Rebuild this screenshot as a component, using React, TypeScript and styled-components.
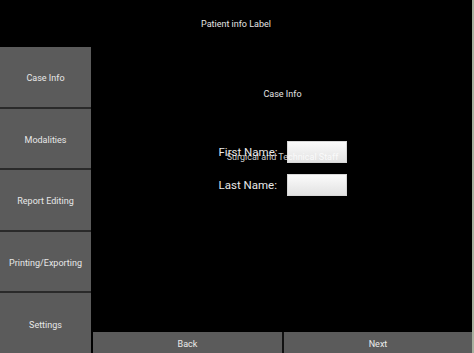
import React from "react";
import styled, { createGlobalStyle } from "styled-components";

const GlobalStyle = createGlobalStyle`
  html, body {
    margin: 0;
    padding: 0;
    background: #000;
    overflow: hidden;
  }
  body {
    font-family: Roboto, "Liberation Sans", sans-serif;
  }
`;

const Screen = styled.div`
  display: flex;
  width: 474px;
  height: 353px;
  background: #000;
  color: #e4e4e4;
`;

const LeftColumn = styled.div`
  display: flex;
  flex-direction: column;
  width: 91px;
  margin-right: 2px;
  padding-top: 47px;
  box-sizing: border-box;
`;

const SideNav = styled.nav`
  flex: 1;
  display: flex;
  flex-direction: column;
  gap: 2px;
  background: #2a2a2a;
`;

const NavButton = styled.div`
  flex: 1;
  display: flex;
  align-items: center;
  justify-content: center;
  padding-top: 3px;
  background: #5b5b5b;
  font-size: 9px;
  color: #e8e8e8;
`;

const Main = styled.div`
  position: relative;
  flex: 1;
  display: flex;
  flex-direction: column;
`;

const Header = styled.div`
  height: 47px;
  display: flex;
  align-items: center;
  justify-content: center;
  font-size: 9px;
  margin-left: -93px;
`;

const Content = styled.div`
  flex: 1;
  display: flex;
  flex-direction: column;
  align-items: center;
  padding-top: 41px;
`;

const SectionTitle = styled.div`
  font-size: 9px;
  line-height: 12px;
  margin-bottom: 41px;
`;

const Form = styled.div`
  display: grid;
  grid-template-columns: 68px 60px;
  row-gap: 11px;
  align-items: center;
`;

const Label = styled.label`
  font-size: 11.5px;
  color: #e8e8e8;
`;

const Input = styled.div`
  height: 22px;
  box-sizing: border-box;
  border: 1px solid #d8d8d8;
  background: linear-gradient(#fbfbfb, #e2e2e2);
`;

const Overlay = styled.div`
  position: absolute;
  left: 0;
  right: 0;
  top: 152px;
  text-align: center;
  font-size: 9px;
  color: rgba(255, 255, 255, 0.8);
  pointer-events: none;
`;

const BottomBar = styled.div`
  height: 21px;
  display: flex;
  gap: 2px;
  background: #111;
`;

const BarButton = styled.div<{ $width: number }>`
  width: ${(p) => p.$width}px;
  display: flex;
  align-items: center;
  justify-content: center;
  padding-top: 2px;
  background: #5b5b5b;
  font-size: 9px;
  color: #ececec;
`;

const EdgeStrip = styled.div`
  width: 2px;
  background: #a9b2a0;
`;

const navItems = ["Case Info", "Modalities", "Report Editing", "Printing/Exporting", "Settings"];

export default function App() {
  return (
    <>
      <GlobalStyle />
      <Screen>
        <LeftColumn>
          <SideNav>
            {navItems.map((item) => (
              <NavButton key={item}>{item}</NavButton>
            ))}
          </SideNav>
        </LeftColumn>
        <Main>
          <Header>Patient info Label</Header>
          <Content>
            <SectionTitle>Case Info</SectionTitle>
            <Form>
              <Label>First Name:</Label>
              <Input />
              <Label>Last Name:</Label>
              <Input />
            </Form>
          </Content>
          <Overlay>Surgical and Technical Staff</Overlay>
          <BottomBar>
            <BarButton $width={189}>Back</BarButton>
            <BarButton $width={188}>Next</BarButton>
          </BottomBar>
        </Main>
        <EdgeStrip />
      </Screen>
    </>
  );
}
